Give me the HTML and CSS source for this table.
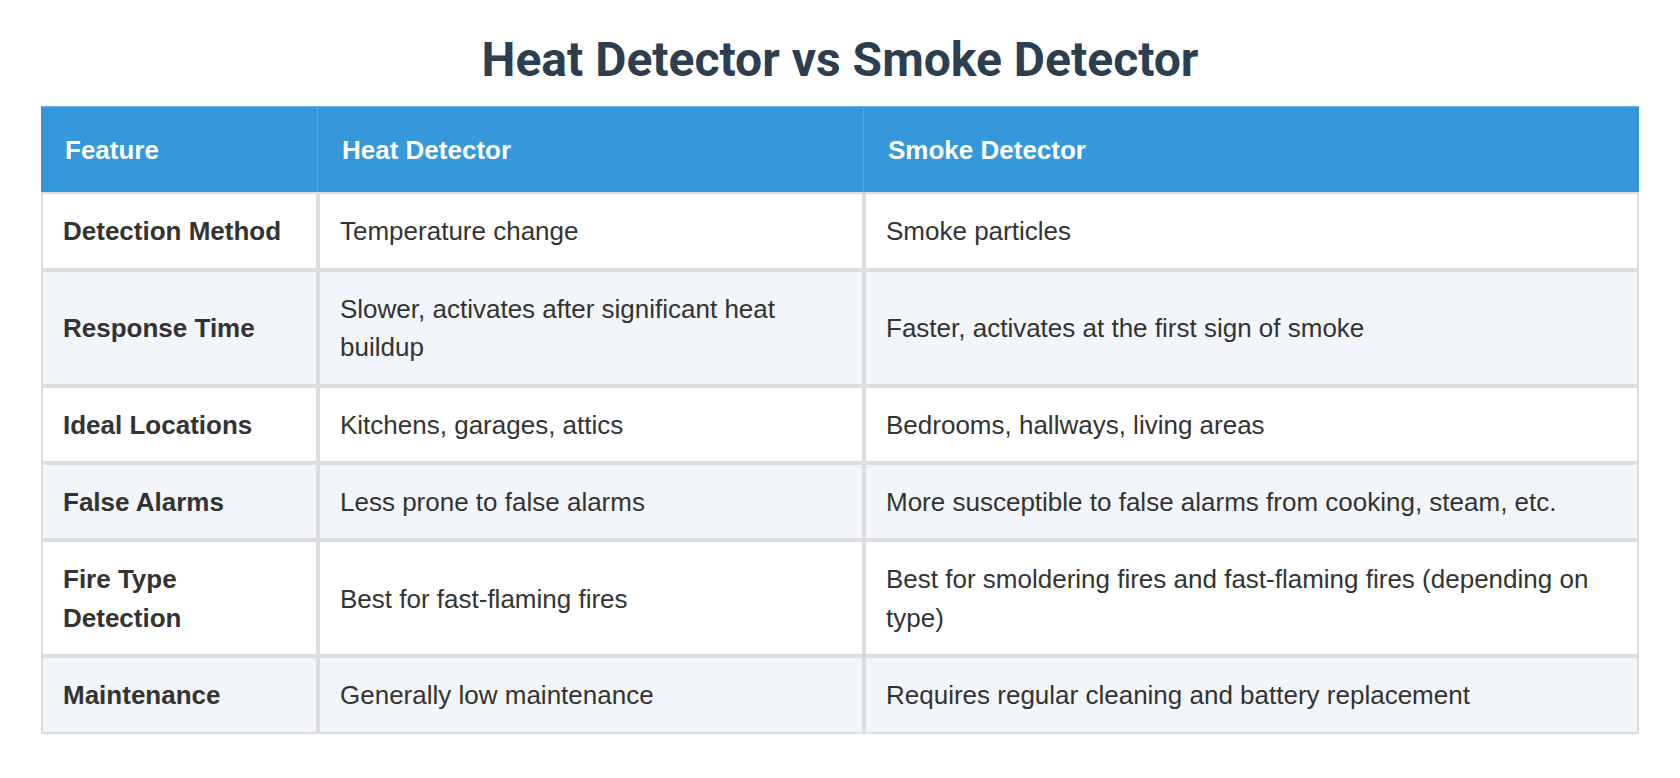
FILE: index.html
```html
<!DOCTYPE html>
<html lang="en">
<head>
<meta charset="utf-8">
<title>Heat Detector vs Smoke Detector</title>
<link rel="stylesheet" href="styles.css">
</head>
<body>
<div class="page">
  <h1 class="title">Heat Detector vs Smoke Detector</h1>
  <table class="compare">
    <colgroup>
      <col class="c1">
      <col class="c2">
      <col class="c3">
    </colgroup>
    <thead>
      <tr>
        <th>Feature</th>
        <th>Heat Detector</th>
        <th>Smoke Detector</th>
      </tr>
    </thead>
    <tbody>
      <tr>
        <td class="feat">Detection Method</td>
        <td>Temperature change</td>
        <td>Smoke particles</td>
      </tr>
      <tr>
        <td class="feat">Response Time</td>
        <td>Slower, activates after significant heat buildup</td>
        <td>Faster, activates at the first sign of smoke</td>
      </tr>
      <tr>
        <td class="feat">Ideal Locations</td>
        <td>Kitchens, garages, attics</td>
        <td>Bedrooms, hallways, living areas</td>
      </tr>
      <tr>
        <td class="feat">False Alarms</td>
        <td>Less prone to false alarms</td>
        <td>More susceptible to false alarms from cooking, steam, etc.</td>
      </tr>
      <tr>
        <td class="feat">Fire Type Detection</td>
        <td>Best for fast-flaming fires</td>
        <td>Best for smoldering fires and fast-flaming fires (depending on type)</td>
      </tr>
      <tr>
        <td class="feat">Maintenance</td>
        <td>Generally low maintenance</td>
        <td>Requires regular cleaning and battery replacement</td>
      </tr>
    </tbody>
  </table>
</div>
</body>
</html>
```

FILE: styles.css
```css
html, body {
  margin: 0;
  padding: 0;
  background: #ffffff;
}

body {
  font-family: "Liberation Sans", Arial, sans-serif;
  color: #333333;
}

.page {
  padding: 31px 41px 40px;
}

.title {
  margin: 0 0 18px;
  font-family: Roboto, "Liberation Sans", sans-serif;
  font-weight: 700;
  font-size: 48px;
  line-height: 57px;
  text-align: center;
  color: #2c3e50;
}

.compare {
  width: 100%;
  table-layout: fixed;
  border-collapse: separate;
  border-spacing: 0;
  font-size: 26px;
  line-height: 38.4px;
  color: #333333;
}

.c1 { width: 277px; }
.c2 { width: 546px; }

.compare th {
  background: #3498db;
  color: #ffffff;
  font-weight: 700;
  text-align: left;
  padding: 23.5px 20px 23.5px 24px;
  border-top: 1px solid #68b1e6;
  border-right: 1px solid #5aa9e0;
}

.compare th:last-child {
  border-right: none;
}

.compare td {
  padding: 18px 20px 17px;
  border: 2px solid #dddddd;
  vertical-align: middle;
  background: #ffffff;
}

.compare tbody tr:nth-child(even) td {
  background: #f2f5f9;
}

.compare td.feat {
  font-weight: 700;
}
```
